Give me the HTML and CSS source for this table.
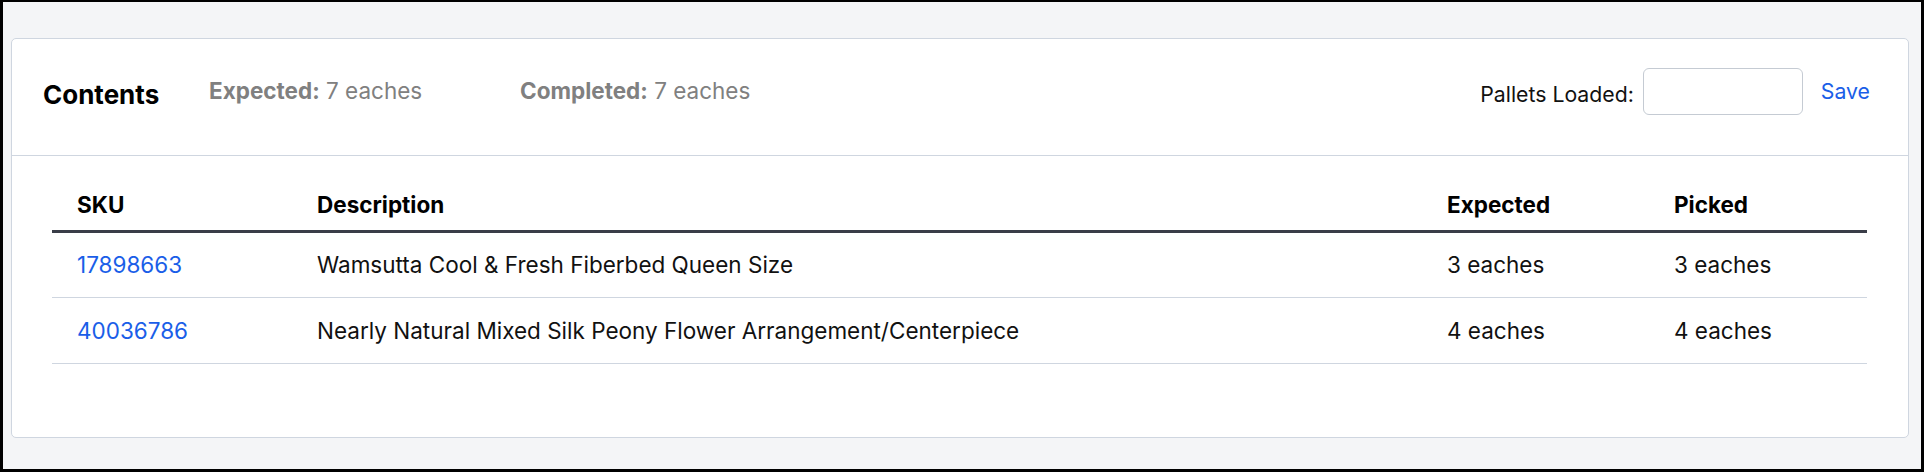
FILE: index.html
```html
<!DOCTYPE html>
<html>
<head>
<meta charset="utf-8">
<link rel="stylesheet" href="styles.css">
</head>
<body>
<div class="frame">
  <section class="card">
    <header class="card-header">
      <h2 class="title">Contents</h2>
      <div class="stat"><b>Expected:</b> 7 eaches</div>
      <div class="stat stat-completed"><b>Completed:</b> 7 eaches</div>
      <div class="spacer"></div>
      <label class="pallets-label" for="pallets">Pallets Loaded:</label>
      <input class="pallets-input" id="pallets" type="text">
      <a class="save-link" href="#">Save</a>
    </header>
    <div class="card-body">
      <table class="contents-table">
        <colgroup>
          <col class="col-sku">
          <col class="col-desc">
          <col class="col-exp">
          <col class="col-picked">
        </colgroup>
        <thead>
          <tr>
            <th>SKU</th>
            <th>Description</th>
            <th>Expected</th>
            <th>Picked</th>
          </tr>
        </thead>
        <tbody>
          <tr>
            <td><a class="sku-link" href="#">17898663</a></td>
            <td>Wamsutta Cool &amp; Fresh Fiberbed Queen Size</td>
            <td>3 eaches</td>
            <td>3 eaches</td>
          </tr>
          <tr>
            <td><a class="sku-link" href="#">40036786</a></td>
            <td>Nearly Natural Mixed Silk Peony Flower Arrangement/Centerpiece</td>
            <td>4 eaches</td>
            <td>4 eaches</td>
          </tr>
        </tbody>
      </table>
    </div>
  </section>
</div>
</body>
</html>
```
FILE: styles.css
```css
* { box-sizing: border-box; }
html, body { margin: 0; padding: 0; }
body {
  font-family: Inter, "Liberation Sans", sans-serif;
  color: #111;
  background: #000;
}
.frame {
  height: 472px;
  border-style: solid;
  border-color: #000;
  border-width: 2px 3px 3px 3px;
  background: #f4f5f7;
  padding: 36px 12px 31px 8px;
}
.card {
  background: #fff;
  border: 1px solid #cfd6e0;
  border-radius: 5px;
  height: 400px;
}
.card-header {
  display: flex;
  align-items: center;
  height: 117px;
  padding: 0 38px 12px 31px;
  border-bottom: 1px solid #cfd6e0;
}
.title {
  margin: 8px 0 0 0;
  font-size: 26px;
  line-height: 32px;
  font-weight: 700;
  color: #000;
  width: 166px;
}
.stat {
  font-size: 22.5px;
  line-height: 28px;
  color: #808080;
  width: 311px;
}
.stat b { font-weight: 700; }
.stat-completed { width: auto; }
.spacer { flex: 1; }
.pallets-label {
  font-size: 21.25px;
  line-height: 26px;
  color: #111;
  margin: 6px 9px 0 0;
}
.pallets-input {
  width: 160px;
  height: 47px;
  border: 1px solid #c5cbd3;
  border-radius: 6px;
  background: #fff;
  margin: 0 18px 0 0;
}
.save-link {
  font-size: 21.25px;
  line-height: 26px;
  color: #1a5ee8;
  text-decoration: none;
}
.card-body {
  padding: 22px 41px 0 40px;
}
.contents-table {
  width: 100%;
  border-collapse: collapse;
  table-layout: fixed;
}
.col-sku { width: 240px; }
.col-exp { width: 227px; }
.col-picked { width: 218px; }
.contents-table th {
  text-align: left;
  font-size: 22.5px;
  font-weight: 700;
  color: #000;
  padding: 14px 0 12px 25px;
  line-height: 26px;
  border-bottom: 3px solid #3a3d48;
}
.contents-table td {
  font-size: 22.5px;
  color: #111;
  padding: 0 0 0 25px;
  height: 66px;
  line-height: 26px;
  border-bottom: 1px solid #cfd6e0;
}
.sku-link {
  color: #1a5ee8;
  text-decoration: none;
}
```
